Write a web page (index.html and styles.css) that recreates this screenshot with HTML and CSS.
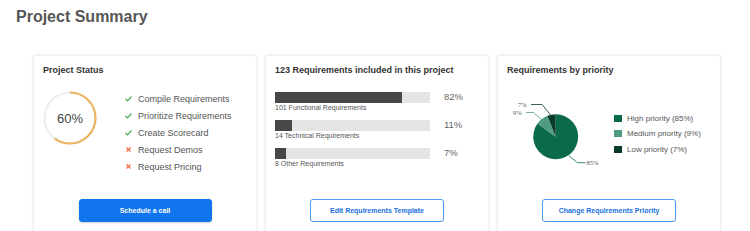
FILE: index.html
```html
<!DOCTYPE html>
<html>
<head>
<meta charset="utf-8">
<link rel="stylesheet" href="styles.css">
</head>
<body>
<main class="page">
  <h1 class="page-title">Project Summary</h1>
  <section class="cards">
    <article class="card">
      <h2 class="card-title">Project Status</h2>
      <div class="card-body status-body">
        <svg class="ring" width="54" height="54" viewBox="0 0 54 54">
          <circle cx="27" cy="27" r="25.5" fill="none" stroke="#ededed" stroke-width="2"/>
          <circle cx="27" cy="27" r="25.5" fill="none" stroke="#ecb463" stroke-width="2.2" stroke-dasharray="96.1 200" transform="rotate(-90 27 27)"/>
          <text x="27" y="31.5" text-anchor="middle" class="ring-text">60%</text>
        </svg>
        <ul class="steps">
          <li class="step"><svg class="mark" width="13" height="8" viewBox="0 0 13 8"><polyline points="0.5,4 2.5,6 6.5,1.5" fill="none" stroke="#4cae4f" stroke-width="1.2"/></svg>Compile Requirements</li>
          <li class="step"><svg class="mark" width="13" height="8" viewBox="0 0 13 8"><polyline points="0.5,4 2.5,6 6.5,1.5" fill="none" stroke="#4cae4f" stroke-width="1.2"/></svg>Prioritize Requirements</li>
          <li class="step"><svg class="mark" width="13" height="8" viewBox="0 0 13 8"><polyline points="0.5,4 2.5,6 6.5,1.5" fill="none" stroke="#4cae4f" stroke-width="1.2"/></svg>Create Scorecard</li>
          <li class="step"><svg class="mark" width="13" height="8" viewBox="0 0 13 8"><path d="M1.5 1.5 L5.5 5.5 M5.5 1.5 L1.5 5.5" fill="none" stroke="#f2683c" stroke-width="1.2"/></svg>Request Demos</li>
          <li class="step"><svg class="mark" width="13" height="8" viewBox="0 0 13 8"><path d="M1.5 1.5 L5.5 5.5 M5.5 1.5 L1.5 5.5" fill="none" stroke="#f2683c" stroke-width="1.2"/></svg>Request Pricing</li>
        </ul>
      </div>
      <div class="card-foot"><button class="btn btn-primary">Schedule a call</button></div>
    </article>

    <article class="card">
      <h2 class="card-title">123 Requirements included in this project</h2>
      <div class="card-body bars-body">
        <div class="bar-row">
          <div class="bar-col">
            <div class="bar"><div class="bar-fill" style="width:82%"></div></div>
            <div class="bar-label">101 Functional Requirements</div>
          </div>
          <div class="bar-pct">82%</div>
        </div>
        <div class="bar-row">
          <div class="bar-col">
            <div class="bar"><div class="bar-fill" style="width:11%"></div></div>
            <div class="bar-label">14 Technical Requirements</div>
          </div>
          <div class="bar-pct">11%</div>
        </div>
        <div class="bar-row">
          <div class="bar-col">
            <div class="bar"><div class="bar-fill" style="width:7%"></div></div>
            <div class="bar-label">8 Other Requirements</div>
          </div>
          <div class="bar-pct">7%</div>
        </div>
      </div>
      <div class="card-foot"><button class="btn btn-outline">Edit Requirements Template</button></div>
    </article>

    <article class="card">
      <h2 class="card-title">Requirements by priority</h2>
      <div class="card-body pie-body">
        <svg class="pie" width="100" height="72" viewBox="507 100 100 72">
          <path d="M555.7 136.7 L555.7 114.2 A22.5 22.5 0 1 1 537.5 123.5 Z" fill="#0b6a4b"/>
          <path d="M555.7 136.7 L537.5 123.5 A22.5 22.5 0 0 1 547.4 115.8 Z" fill="#4f9a83"/>
          <path d="M555.7 136.7 L547.4 115.8 A22.5 22.5 0 0 1 555.7 114.2 Z" fill="#073b2a"/>
          <polyline points="531,104.5 542,104.5 550.5,114.8" fill="none" stroke="#073b2a" stroke-width="0.8"/>
          <polyline points="526,112.5 533.5,112.5 541.5,119.5" fill="none" stroke="#4f9a83" stroke-width="0.8"/>
          <polyline points="568.5,155.5 577.5,162.7 585.5,162.7" fill="none" stroke="#0b6a4b" stroke-width="0.8"/>
          <text x="518" y="106.8" class="pie-label">7%</text>
          <text x="513" y="115" class="pie-label">9%</text>
          <text x="586.5" y="165" class="pie-label">85%</text>
        </svg>
        <ul class="legend">
          <li class="legend-item"><span class="swatch swatch-high"></span>High priority (85%)</li>
          <li class="legend-item"><span class="swatch swatch-med"></span>Medium priority (9%)</li>
          <li class="legend-item"><span class="swatch swatch-low"></span>Low priority (7%)</li>
        </ul>
      </div>
      <div class="card-foot"><button class="btn btn-outline">Change Requirements Priority</button></div>
    </article>
  </section>
</main>
</body>
</html>
```

FILE: styles.css
```css
* { box-sizing: border-box; }
html, body { margin: 0; padding: 0; background: #ffffff; }
body {
  font-family: "Liberation Sans", Arial, Helvetica, sans-serif;
  color: #555;
  overflow: hidden;
}
.page { padding: 0 16px; }
.page-title {
  margin: 0;
  padding-top: 7px;
  font-size: 16px;
  line-height: 20px;
  font-weight: 700;
  color: #565656;
}
.cards {
  display: flex;
  gap: 8px;
  margin-top: 28px;
  padding-left: 17px;
}
.card {
  width: 224px;
  height: 190px;
  flex: none;
  display: flex;
  flex-direction: column;
  background: #fff;
  border: 1px solid #f0f0f0;
  border-radius: 3px;
  box-shadow: 0 0 3px rgba(0,0,0,0.10);
  padding: 8px 9px 22px;
}
.card-title {
  margin: 0;
  font-size: 9px;
  line-height: 12px;
  font-weight: 700;
  color: #333;
}
.card-body { flex: 1; }
.card-foot { display: flex; justify-content: center; }
.btn {
  height: 23px;
  width: 133px;
  border-radius: 3px;
  font-family: "Liberation Sans", Arial, sans-serif;
  font-size: 7px;
  font-weight: 700;
  padding: 0;
  cursor: pointer;
}
.btn-primary {
  background: #0f74ee;
  border: 1px solid #0f74ee;
  color: #fff;
  box-shadow: 0 1px 2px rgba(0,0,0,0.2);
}
.btn-outline {
  background: #fff;
  border: 1px solid #4b9cf2;
  color: #1a6fe0;
  width: 134px;
}

/* status card */
.status-body {
  display: flex;
  align-items: flex-start;
  padding-top: 14px;
}
.ring { margin-top: 1px; flex: none; }
.ring-text {
  font-family: "Liberation Sans", Arial, sans-serif;
  font-size: 13px;
  fill: #444;
}
.steps {
  list-style: none;
  margin: 0 0 0 28px;
  padding: 0;
}
.step {
  display: flex;
  align-items: center;
  height: 17px;
  font-size: 9px;
  color: #555;
}
.mark { flex: none; }

/* bars card */
.bars-body { padding-top: 16px; }
.bar-row {
  display: flex;
  gap: 14px;
  margin-bottom: 7px;
}
.bar-col { width: 155px; flex: none; }
.bar {
  height: 10.5px;
  background: #e4e4e4;
}
.bar-fill {
  height: 100%;
  background: #474747;
}
.bar-label {
  font-size: 7px;
  line-height: 10.5px;
  color: #555;
}
.bar-pct {
  font-size: 9.5px;
  line-height: 10.5px;
  color: #666;
}

/* pie card */
.pie-body {
  display: flex;
  align-items: flex-start;
  padding-top: 24px;
}
.pie { flex: none; display: block; }
.pie-label {
  font-family: "Liberation Serif", "Times New Roman", serif;
  font-size: 6.5px;
  fill: #555;
}
.legend {
  list-style: none;
  margin: 11px 0 0 7px;
  padding: 0;
}
.legend-item {
  display: flex;
  align-items: center;
  height: 15.3px;
  font-size: 8px;
  color: #555;
}
.swatch {
  width: 8px;
  height: 7px;
  margin-right: 5px;
  flex: none;
}
.swatch-high { background: #0b6a4b; }
.swatch-med { background: #4f9a83; }
.swatch-low { background: #073b2a; }
```
